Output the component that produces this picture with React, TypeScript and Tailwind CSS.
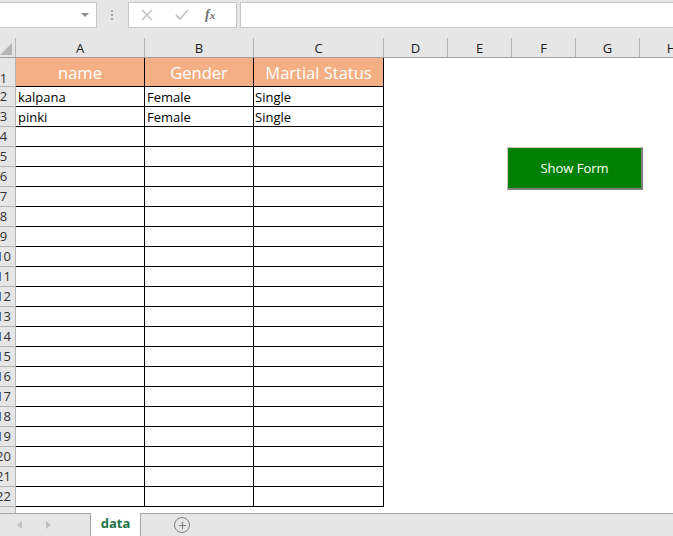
import { Plus } from "lucide-react";

const columns = [
  { label: "A", width: "w-[129px]" },
  { label: "B", width: "w-[109px]" },
  { label: "C", width: "w-[130px]" },
  { label: "D", width: "w-[64px]" },
  { label: "E", width: "w-[64px]" },
  { label: "F", width: "w-[64px]" },
  { label: "G", width: "w-[64px]" },
  { label: "H", width: "w-[64px]" },
];

const people = [
  ["kalpana", "Female", "Single"],
  ["pinki", "Female", "Single"],
];

const rowNumbers = Array.from({ length: 22 }, (_, i) => i + 1);
const bodyRows = Array.from({ length: 21 }, (_, i) => people[i] ?? ["", "", ""]);

function FormulaBar() {
  return (
    <div className="flex h-[38px] items-start bg-[#e6e6e6] pt-[2px]">
      <div className="flex h-[26px] w-[97px] items-center justify-end border border-l-0 border-[#c6c6c6] bg-white pr-[7px]">
        <svg width="8" height="4" viewBox="0 0 8 4">
          <path d="M0 0h8L4 4z" fill="#8c8c8c" />
        </svg>
      </div>
      <div className="flex w-[31px] justify-center pt-[8px]">
        <svg width="3" height="11" viewBox="0 0 3 11" fill="#a6a6a6">
          <rect x="0" y="0" width="2" height="2" />
          <rect x="0" y="4" width="2" height="2" />
          <rect x="0" y="8" width="2" height="2" />
        </svg>
      </div>
      <div className="flex h-[26px] w-[109px] items-center border border-[#c6c6c6] bg-white">
        <svg className="ml-[12px]" width="12" height="12" viewBox="0 0 12 12" stroke="#c4c4c4" strokeWidth="1.6" fill="none">
          <path d="M1 1l10 10M11 1L1 11" />
        </svg>
        <svg className="ml-[22px]" width="14" height="12" viewBox="0 0 14 12" stroke="#c4c4c4" strokeWidth="1.8" fill="none">
          <path d="M1 6l4 4 8-9" />
        </svg>
        <span className="ml-[16px] font-['Liberation_Serif',serif] text-[14px] font-bold italic leading-none text-[#707070]">
          f<span className="text-[11px]">x</span>
        </span>
      </div>
      <div className="ml-[3px] h-[26px] flex-1 border border-r-0 border-[#c6c6c6] bg-white" />
    </div>
  );
}

function ColumnHeaders() {
  return (
    <div className="flex h-[20px] overflow-hidden border-b border-[#9f9f9f] bg-[#e6e6e6]">
      <div className="flex w-[16px] shrink-0 items-end justify-end border-r border-[#b5b5b5] pb-[2px] pr-[3px]">
        <svg width="12" height="12" viewBox="0 0 12 12">
          <path d="M12 0v12H0z" fill="#b4b4b4" />
        </svg>
      </div>
      {columns.map((c) => (
        <div
          key={c.label}
          className={`${c.width} shrink-0 border-r border-[#b5b5b5] pt-[1px] text-center text-[13px] leading-[19px] text-[#202020]`}
        >
          {c.label}
        </div>
      ))}
    </div>
  );
}

function RowHeaders() {
  return (
    <div className="w-[16px] shrink-0 overflow-hidden border-r border-[#b5b5b5] bg-[#e6e6e6] text-[13px] text-[#303030]">
      {rowNumbers.map((n) => (
        <div
          key={n}
          className={`${n === 1 ? "h-[29px] items-end pb-[1px]" : "h-[20px] items-center"} flex border-b border-[#b5b5b5] leading-none`}
        >
          {/* numbers sit centred near the left edge, so the two digit ones get clipped */}
          <div className="flex w-[7px] justify-center whitespace-nowrap">{n}</div>
        </div>
      ))}
    </div>
  );
}

function DataTable() {
  return (
    <div className="w-[368px] shrink-0 self-start border-r border-black text-[13px]">
      <div className="flex h-[29px] border-b border-black bg-[#f4b084] text-center text-[16.5px] leading-[29px] text-white">
        <div className="w-[129px] border-r border-black">name</div>
        <div className="w-[109px] border-r border-black">Gender</div>
        <div className="flex-1">Martial Status</div>
      </div>
      {bodyRows.map((row, i) => (
        <div key={i} className="flex h-[20px] border-b border-black leading-[21px] text-black">
          <div className="w-[129px] border-r border-black pl-[2px]">{row[0]}</div>
          <div className="w-[109px] border-r border-black pl-[2px]">{row[1]}</div>
          <div className="flex-1 pl-[1px]">{row[2]}</div>
        </div>
      ))}
    </div>
  );
}

function SheetTabs() {
  return (
    <div className="flex h-[23px] items-stretch border-t border-[#a6a6a6] bg-[#e6e6e6]">
      <div className="flex w-[90px] items-center gap-[24px] pl-[17px]">
        <svg width="5" height="8" viewBox="0 0 5 8">
          <path d="M5 0v8L0 4z" fill="#c0c0c0" />
        </svg>
        <svg width="5" height="8" viewBox="0 0 5 8">
          <path d="M0 0v8l5-4z" fill="#c0c0c0" />
        </svg>
      </div>
      <div className="-mt-px flex w-[51px] items-center justify-center border-x border-[#a6a6a6] bg-white pb-[1px] text-[13px] font-bold text-[#217346]">
        data
      </div>
      <div className="ml-[33px] flex items-center">
        <div className="flex h-[16px] w-[16px] items-center justify-center rounded-full border border-[#808080]">
          <Plus size={11} strokeWidth={2.5} color="#808080" />
        </div>
      </div>
    </div>
  );
}

export default function App() {
  return (
    <div className="flex h-[536px] w-[673px] flex-col overflow-hidden bg-white font-['Open_Sans','Noto_Sans',sans-serif]">
      <FormulaBar />
      <ColumnHeaders />
      <div className="relative flex min-h-0 flex-1 overflow-hidden">
        <RowHeaders />
        <DataTable />
        <button className="absolute left-[507px] top-[89px] h-[43px] w-[136px] border border-b-2 border-r-2 border-t-[#c8c8c8] border-l-[#c8c8c8] border-b-[#7f7f7f] border-r-[#7f7f7f] bg-[#008000] pt-[1px] text-[13px] text-white">
          Show Form
        </button>
      </div>
      <SheetTabs />
    </div>
  );
}
